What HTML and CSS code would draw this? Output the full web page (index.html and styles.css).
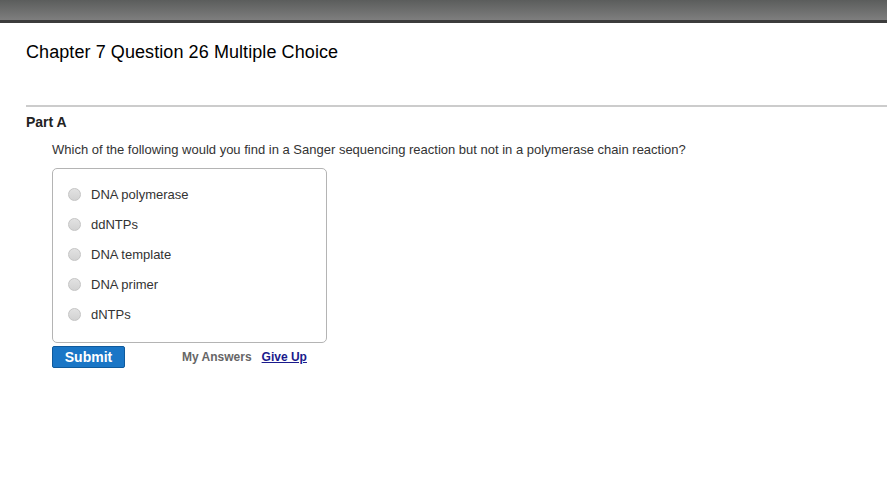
FILE: index.html
```html
<!DOCTYPE html>
<html>
<head>
<meta charset="utf-8">
<link rel="stylesheet" href="styles.css">
</head>
<body>
<div class="topbar"></div>
<div class="page">
  <h1 class="title">Chapter 7 Question 26 Multiple Choice</h1>
  <div class="part">
    <h2 class="part-title">Part A</h2>
    <div class="part-body">
      <p class="question">Which of the following would you find in a Sanger sequencing reaction but not in a polymerase chain reaction?</p>
      <div class="choices">
        <label class="choice"><span class="radio"></span><span class="choice-text">DNA polymerase</span></label>
        <label class="choice"><span class="radio"></span><span class="choice-text">ddNTPs</span></label>
        <label class="choice"><span class="radio"></span><span class="choice-text">DNA template</span></label>
        <label class="choice"><span class="radio"></span><span class="choice-text">DNA primer</span></label>
        <label class="choice"><span class="radio"></span><span class="choice-text">dNTPs</span></label>
      </div>
      <div class="actions">
        <button class="submit">Submit</button>
        <span class="my-answers">My Answers</span>
        <a class="give-up" href="#">Give Up</a>
      </div>
    </div>
  </div>
</div>
</body>
</html>
```
FILE: styles.css
```css
html, body {
  margin: 0;
  padding: 0;
  background: #fff;
  font-family: "Liberation Sans", Arial, sans-serif;
}
.topbar {
  height: 20px;
  background: linear-gradient(#5b5d5c, #7e7e7e);
  border-bottom: 3px solid #3c3c3c;
}
.page {
  padding-left: 26px;
}
.title {
  margin: 0;
  padding-top: 18px;
  font-size: 18px;
  font-weight: normal;
  color: #000;
  line-height: 22px;
  height: 64px;
  letter-spacing: 0.08px;
}
.part {
  border-top: 2px solid #cccccc;
}
.part-title {
  margin: 0;
  padding-top: 6px;
  font-size: 14px;
  font-weight: bold;
  color: #222;
  line-height: 18px;
}
.part-body {
  padding-left: 26px;
}
.question {
  margin: 11px 0 0 0;
  font-size: 13px;
  color: #333;
  line-height: 16px;
}
.choices {
  margin-top: 10px;
  width: 273px;
  border: 1px solid #b4b4b4;
  border-radius: 5px;
  padding: 10px 0 13px 0;
  display: flex;
  flex-direction: column;
}
.choice {
  display: flex;
  align-items: center;
  height: 30px;
  padding-left: 15px;
  font-size: 13px;
  color: #333;
}
.radio {
  width: 11px;
  height: 11px;
  border-radius: 50%;
  border: 1px solid #c4c4c4;
  background: linear-gradient(#e2e2e2, #d2d2d2);
  margin-right: 10px;
}
.actions {
  display: flex;
  align-items: center;
  margin-top: 3px;
}
.submit {
  width: 73px;
  height: 22px;
  padding: 0;
  background: #1a76c6;
  border: 1px solid #0f5a9c;
  border-radius: 2px;
  color: #fff;
  font-family: "Liberation Sans", Arial, sans-serif;
  font-weight: bold;
  font-size: 14px;
}
.my-answers {
  margin-left: 57px;
  font-size: 12px;
  font-weight: bold;
  color: #666;
}
.give-up {
  margin-left: 10px;
  font-size: 12px;
  font-weight: bold;
  color: #1a1a8c;
  text-decoration: underline;
}
```
